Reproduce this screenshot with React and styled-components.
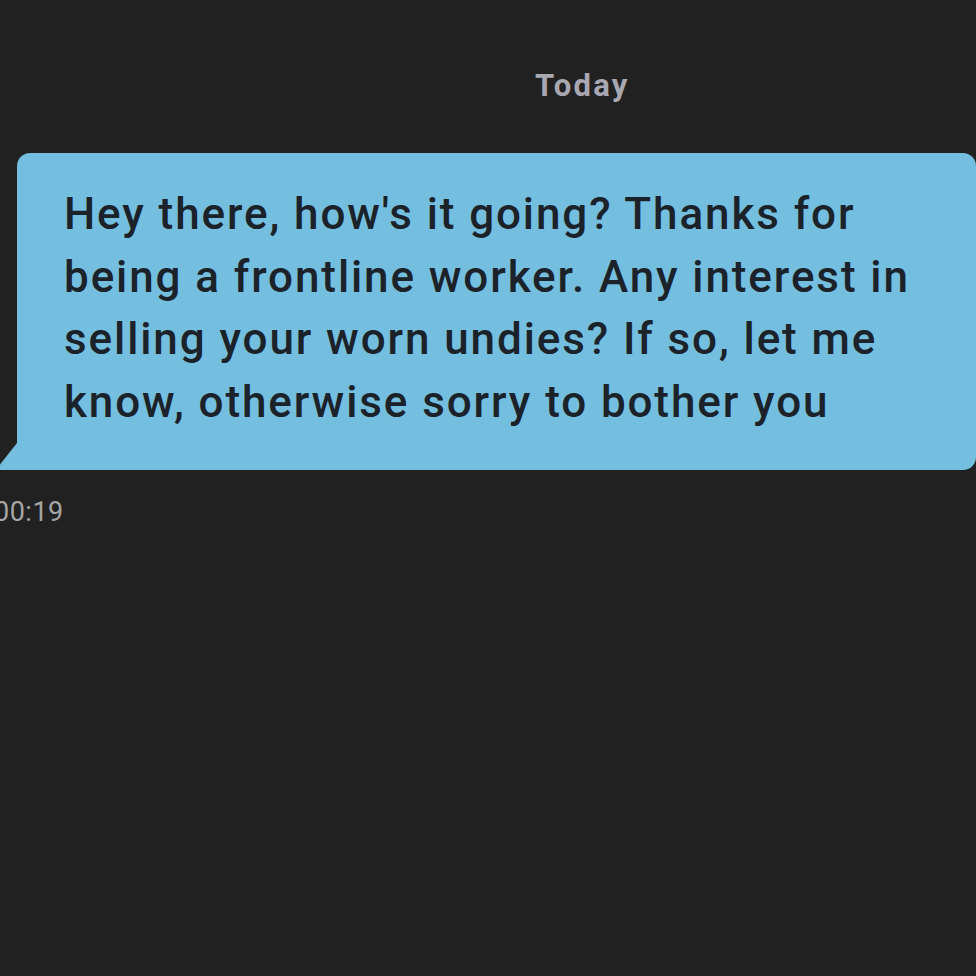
import React from "react";
import styled, { createGlobalStyle } from "styled-components";

const Global = createGlobalStyle`
  html, body { margin: 0; padding: 0; background: #212121; }
  body { font-family: Roboto, "Noto Sans", sans-serif; overflow: hidden; }
`;

const Screen = styled.div`
  width: 976px;
  height: 976px;
  background: #212121;
  display: flex;
  flex-direction: column;
  overflow: hidden;
`;

const DayLabel = styled.div`
  padding-top: 66px;
  padding-left: 535px;
  font-size: 31px;
  font-weight: 700;
  color: #a9a8b2;
  line-height: 40px;
  letter-spacing: 2.2px;
`;

const BubbleRow = styled.div`
  margin-top: 47px;
  padding-left: 17px;
  display: flex;
`;

const Bubble = styled.div`
  position: relative;
  flex: 1;
  background: #74bfdf;
  border-radius: 13px 13px 13px 0;
  padding: 30px 20px 37px 47px;
  color: #1b2229;
  font-size: 44px;
  line-height: 62.5px;
  font-weight: 500;
  letter-spacing: 1.9px;

  &::before {
    content: "";
    position: absolute;
    left: -17px;
    bottom: 0;
    width: 17px;
    height: 27px;
    background: #74bfdf;
    clip-path: polygon(100% 0, 100% 100%, 0 100%, 0 80%);
  }
`;

const Line = styled.div`
  white-space: nowrap;
`;

const Time = styled.div`
  margin-top: 26px;
  margin-left: -6px;
  font-size: 27px;
  color: #a6a6a6;
  line-height: 32px;
  letter-spacing: 0.5px;
`;

const lines = [
  "Hey there, how's it going? Thanks for",
  "being a frontline worker. Any interest in",
  "selling your worn undies? If so, let me",
  "know, otherwise sorry to bother you",
];

export default function App() {
  return (
    <Screen>
      <Global />
      <DayLabel>Today</DayLabel>
      <BubbleRow>
        <Bubble>
          {lines.map((l) => (
            <Line key={l}>{l}</Line>
          ))}
        </Bubble>
      </BubbleRow>
      <Time>00:19</Time>
    </Screen>
  );
}
